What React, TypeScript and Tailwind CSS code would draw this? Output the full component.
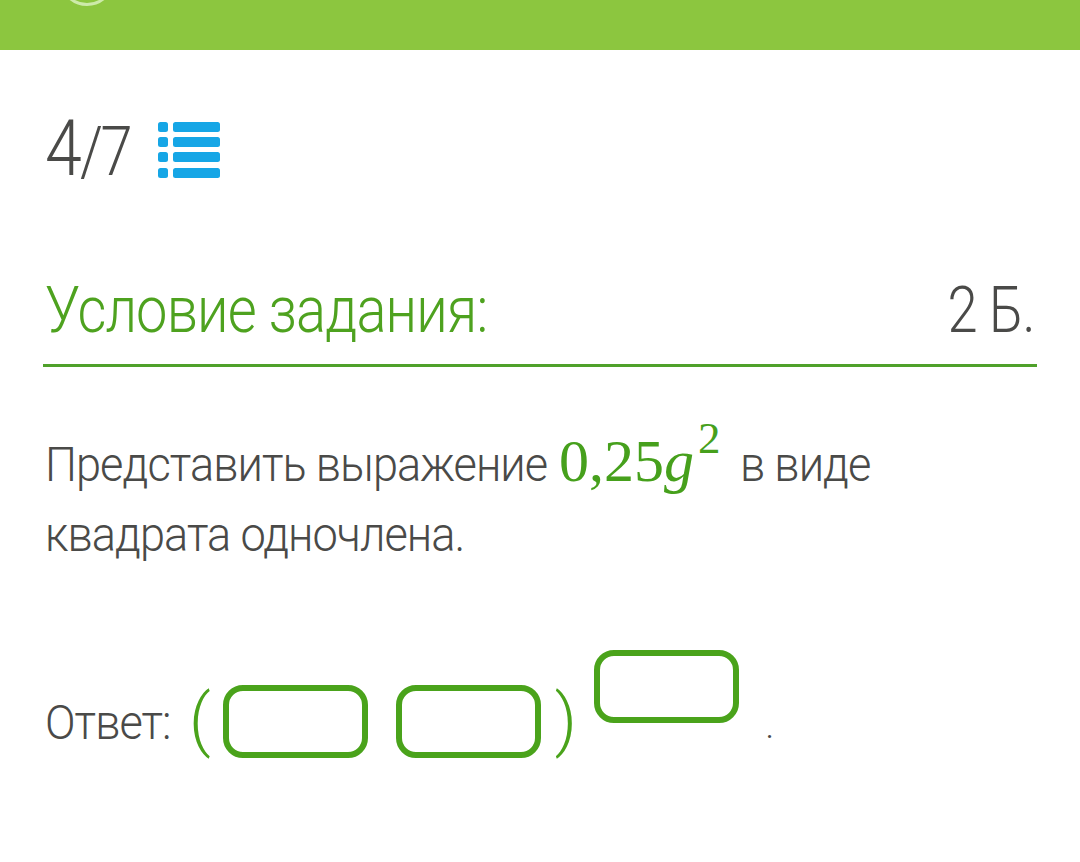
import React from "react";

const roboto = { fontFamily: "Roboto, 'Liberation Sans', sans-serif" };
const serif = { fontFamily: "'Liberation Serif', 'DejaVu Serif', serif" };

function ListIcon() {
  return (
    <svg width="62" height="56" viewBox="0 0 62 56" className="block">
      {[0, 15, 30, 46].map((y) => (
        <g key={y} fill="#16a6e6">
          <rect x="0" y={y} width="10" height="10" rx="2.5" />
          <rect x="15" y={y} width="47" height="10" rx="2.5" />
        </g>
      ))}
    </svg>
  );
}

function Box() {
  return <div className="w-[145px] h-[73px] rounded-[20px] border-[6px] border-[#4aa31b]" />;
}

export default function App() {
  return (
    <div className="w-[1080px] h-[862px] bg-white overflow-hidden" style={roboto}>
      <div className="relative h-[50px] bg-[#8cc63f] overflow-hidden">
        <div className="absolute left-[59px] top-[-50px] w-[56px] h-[56px] rounded-full border-[3px] border-[#cdeaa9]" />
      </div>

      <div className="px-[45px]">
        <div className="flex items-end mt-[68px] h-[70px]">
          <span className="inline-block w-[85px] whitespace-nowrap origin-left scale-x-[0.85] text-[#4a4a48] font-light leading-none">
            <span className="text-[78px] tracking-[-4px]">4</span>
            <span className="text-[68px] tracking-[-3px] ml-[2px]">/7</span>
          </span>
          <span className="ml-[28px] mb-[10px]"><ListIcon /></span>
        </div>

        <div className="mt-[91px] flex items-end justify-between border-b-[3px] border-[#4fa12a] pb-[21px] -mx-[2px] px-[2px]">
          <span className="inline-block whitespace-nowrap origin-left scale-x-[0.875] text-[#4ea21f] font-light text-[64px] leading-none tracking-[-1px]">
            Условие задания:
          </span>
          <span className="inline-block whitespace-nowrap origin-right scale-x-[0.85] text-[#4a4a48] font-light text-[64px] leading-none tracking-[-1px]">
            2 Б.
          </span>
        </div>

        <div className="mt-[63px] text-[#4a4a48] font-light text-[48px] leading-[70px] tracking-[-1px]">
          <div className="flex items-baseline whitespace-nowrap">
            <span className="inline-block w-[514px] origin-left scale-x-[0.94]">Представить выражение</span>
            <span className="text-[#46a01c] text-[60px] tracking-normal leading-none" style={serif}>
              0,25<i>g</i>
              <span className="relative top-[-28px] ml-[4px] text-[45px]">2</span>
            </span>
            <span className="inline-block ml-[19px] origin-left scale-x-[0.94]">в виде</span>
          </div>
          <div className="whitespace-nowrap">
            <span className="inline-block origin-left scale-x-[0.94]">квадрата одночлена.</span>
          </div>
        </div>

        <div className="mt-[115px] flex items-start">
          <span className="inline-block w-[127px] mt-[14px] whitespace-nowrap origin-left scale-x-[0.94] text-[#4a4a48] font-light text-[48px] leading-none tracking-[-1px]">
            Ответ:
          </span>
          <span className="ml-[17px] mt-[1px] text-[#4aa31b] font-light text-[68px] leading-none">(</span>
          <span className="ml-[12px]"><Box /></span>
          <span className="ml-[28px]"><Box /></span>
          <span className="ml-[14px] mt-[1px] text-[#4aa31b] font-light text-[68px] leading-none">)</span>
          <span className="ml-[17px] mt-[-35px]"><Box /></span>
          <span className="ml-[27px] mt-[30px] text-[#4a4a48] text-[28px] leading-none">.</span>
        </div>
      </div>
    </div>
  );
}
